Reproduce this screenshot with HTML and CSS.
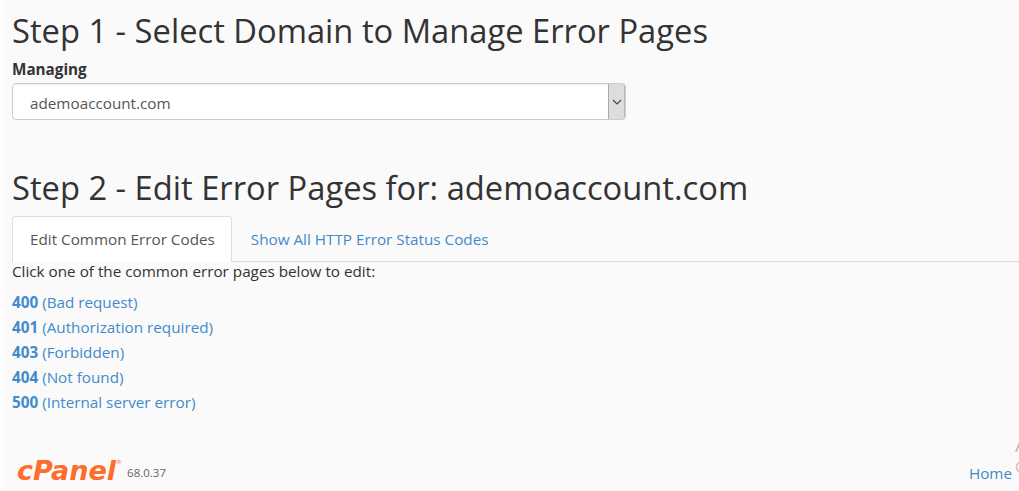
FILE: index.html
```html
<!DOCTYPE html>
<html lang="en">

<head>
    <meta charset="UTF-8">
    <title>Error Pages</title>
    <link rel="stylesheet" href="styles.css">
</head>

<body>
    <div class="content">
        <h1>Step 1 - Select Domain to Manage Error Pages</h1>
        <div class="field-label">Managing</div>
        <div class="select-box">
            <span class="select-value">ademoaccount.com</span>
            <span class="select-arrow">
                <svg width="10" height="6" viewBox="0 0 10 6"><path d="M1 1l4 4 4-4" fill="none" stroke="#444" stroke-width="1.2"/></svg>
            </span>
        </div>

        <h1 class="step-two">Step 2 - Edit Error Pages for: ademoaccount.com</h1>
        <ul class="tabs">
            <li class="tab active">Edit Common Error Codes</li>
            <li class="tab link-tab"><a href="#">Show All HTTP Error Status Codes</a></li>
        </ul>
        <p class="intro">Click one of the common error pages below to edit:</p>
        <ul class="codes">
            <li><a href="#"><b>400</b> (Bad request)</a></li>
            <li><a href="#"><b>401</b> (Authorization required)</a></li>
            <li><a href="#"><b>403</b> (Forbidden)</a></li>
            <li><a href="#"><b>404</b> (Not found)</a></li>
            <li><a href="#"><b>500</b> (Internal server error)</a></li>
        </ul>
    </div>

    <!-- Footer -->
    <footer class="footer">
        <div class="brand">
            <span class="logo">cPanel<sup>®</sup></span>
            <span class="version">68.0.37</span>
        </div>
        <a class="home" href="#">Home</a>
        <div class="cut-off">
            <span class="cut-big">A</span>
            <span class="cut-small">C</span>
        </div>
    </footer>
</body>

</html>
```

FILE: styles.css
```css
html, body {
    height: 100%;
}

body {
    font-family: "Open Sans", sans-serif;
    font-size: 15.25px;
    margin: 0;
    background: linear-gradient(to right, #fff, #fafafa 5px);
    color: #333;
    overflow: hidden;
    position: relative;
}

.content {
    padding: 0 0 0 12px;
}

h1 {
    font-size: 32.7px;
    font-weight: 400;
    line-height: 34px;
    margin: 0;
    padding-top: 14px;
    color: #333;
}

.field-label {
    font-weight: 700;
    line-height: 20px;
    margin-top: 11px;
}

.select-box {
    display: flex;
    width: 612px;
    height: 35px;
    margin-top: 4px;
    background-color: #fff;
    border: 1px solid #ccc;
    border-radius: 4px;
    box-shadow: inset 0 1px 1px rgba(0, 0, 0, 0.075);
}

.select-value {
    flex-grow: 1;
    padding-left: 17px;
    line-height: 39px;
    color: #555;
}

.select-arrow {
    display: flex;
    align-items: center;
    justify-content: center;
    width: 15px;
    background-color: #ddd;
    border-left: 1px solid #aaa;
    border-right: 1px solid #bbb;
    border-radius: 0 3px 3px 0;
}

.step-two {
    padding-top: 51px;
}

.tabs {
    display: flex;
    list-style: none;
    margin: 11px 0 0 0;
    padding: 0;
    border-bottom: 1px solid #ddd;
}

.tab {
    line-height: 20px;
    padding: 12px 16px 12px 17px;
    margin-bottom: -1px;
    border: 1px solid transparent;
}

.tab.active {
    color: #555;
    background-color: #fff;
    border-color: #ddd;
    border-bottom-color: #fff;
    border-radius: 4px 4px 0 0;
}

.link-tab {
    padding-left: 18px;
}

a {
    color: #428bca;
    text-decoration: none;
}

.intro {
    line-height: 18px;
    margin: 0;
}

.codes {
    list-style: none;
    margin: 12px 0 0 0;
    padding: 0;
}

.codes li {
    line-height: 20px;
    margin-bottom: 5px;
}

/* Footer */
.footer {
    position: absolute;
    left: 0;
    right: 0;
    bottom: 0;
    height: 60px;
    display: flex;
    align-items: flex-end;
    padding-left: 17px;
}

.brand {
    display: flex;
    align-items: flex-start;
    gap: 5px;
    flex-grow: 1;
    height: 34px;
}

.logo {
    font-family: "DejaVu Sans", sans-serif;
    font-size: 27px;
    font-weight: 700;
    font-style: italic;
    line-height: 28px;
    color: #ff6c2c;
}

.logo sup {
    font-size: 6px;
    font-style: normal;
    font-weight: 400;
    vertical-align: 16px;
    line-height: 0;
}

.version {
    font-size: 11.5px;
    line-height: 16px;
    margin-top: 8px;
    color: #666;
}

.home {
    line-height: 20px;
    margin-bottom: 8px;
    margin-right: 3px;
}

.cut-off {
    width: 4px;
    height: 60px;
    overflow: hidden;
    color: #bbb;
}

.cut-big {
    display: block;
    font-size: 20px;
    line-height: 24px;
    margin-top: 2px;
}

.cut-small {
    display: block;
    font-size: 14px;
    line-height: 20px;
}
```
